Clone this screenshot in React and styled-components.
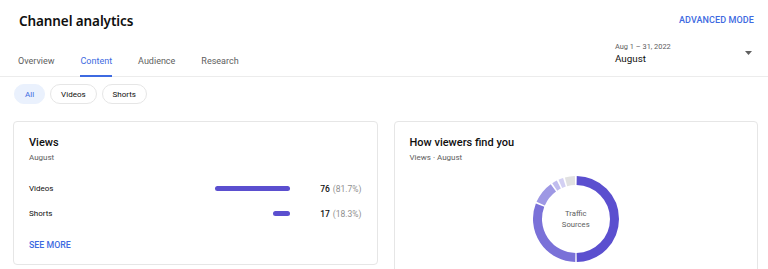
import React from "react";
import styled, { createGlobalStyle } from "styled-components";

const GlobalStyle = createGlobalStyle`
  body {
    margin: 0;
    background: #ffffff;
    font-family: Roboto, "Liberation Sans", sans-serif;
    color: #0f0f0f;
  }
`;

const tabs = ["Overview", "Content", "Audience", "Research"];
const chips = ["All", "Videos", "Shorts"];

const viewRows = [
  { label: "Videos", value: 76, pct: 81.7 },
  { label: "Shorts", value: 17, pct: 18.3 },
];

const segments = [
  { from: 1, to: 179, color: "#5b4fcf" },
  { from: 181, to: 291, color: "#7a71d8" },
  { from: 293.5, to: 324, color: "#9e98e4" },
  { from: 326.5, to: 333.5, color: "#c0bcee" },
  { from: 336, to: 342.5, color: "#d3d0f3" },
  { from: 345, to: 358.5, color: "#e1e1e1" },
];

const point = (deg, r) => {
  const a = ((deg - 90) * Math.PI) / 180;
  return [43 + r * Math.cos(a), 43 + r * Math.sin(a)];
};

const arc = (from, to, r) => {
  const [x1, y1] = point(from, r);
  const [x2, y2] = point(to, r);
  const large = to - from > 180 ? 1 : 0;
  return `M ${x1} ${y1} A ${r} ${r} 0 ${large} 1 ${x2} ${y2}`;
};

const App = () => {
  const maxPct = Math.max(...viewRows.map((r) => r.pct));
  return (
    <Page>
      <GlobalStyle />
      <TopBar>
        <Title>Channel analytics</Title>
        <TextLink>ADVANCED MODE</TextLink>
      </TopBar>
      <NavRow>
        <Tabs>
          {tabs.map((t) => (
            <Tab key={t} $active={t === "Content"}>
              {t}
            </Tab>
          ))}
        </Tabs>
        <DatePicker>
          <DateText>
            <DateRange>Aug 1 – 31, 2022</DateRange>
            <DateLabel>August</DateLabel>
          </DateText>
          <Caret>
            <svg width="7" height="4" viewBox="0 0 7 4">
              <path d="M0 0 L7 0 L3.5 4 Z" fill="#606060" />
            </svg>
          </Caret>
        </DatePicker>
      </NavRow>
      <ChipRow>
        {chips.map((c) => (
          <Chip key={c} $active={c === "All"}>
            {c}
          </Chip>
        ))}
      </ChipRow>
      <Cards>
        <Card>
          <CardTitle>Views</CardTitle>
          <CardSub>August</CardSub>
          <Rows>
            {viewRows.map((r) => (
              <Row key={r.label}>
                <RowLabel>{r.label}</RowLabel>
                <BarArea>
                  <Bar style={{ width: `${(r.pct / maxPct) * 75}px` }} />
                </BarArea>
                <Value>
                  <b>{r.value}</b>
                  <Pct>({r.pct}%)</Pct>
                </Value>
              </Row>
            ))}
          </Rows>
          <SeeMore>SEE MORE</SeeMore>
        </Card>
        <Card $tall>
          <CardTitle>How viewers find you</CardTitle>
          <CardSub>Views · August</CardSub>
          <DonutWrap>
            <svg width="86" height="86" viewBox="0 0 86 86">
              {segments.map((s) => (
                <path
                  key={s.from}
                  d={arc(s.from, s.to, 38.5)}
                  fill="none"
                  stroke={s.color}
                  strokeWidth="9"
                />
              ))}
            </svg>
            <DonutLabel>
              Traffic
              <br />
              Sources
            </DonutLabel>
          </DonutWrap>
        </Card>
      </Cards>
    </Page>
  );
};

const Page = styled.div`
  width: 768px;
  height: 269px;
  overflow: hidden;
`;

const TopBar = styled.div`
  height: 41px;
  display: flex;
  align-items: center;
  justify-content: space-between;
  padding: 0 14px 0 19px;
`;

const Title = styled.div`
  font-family: "Noto Sans", sans-serif;
  font-weight: 600;
  font-size: 13.5px;
  letter-spacing: -0.1px;
`;

const TextLink = styled.div`
  color: #3e6ae1;
  font-size: 9px;
  font-weight: 500;
  letter-spacing: 0.1px;
  margin-top: -1px;
`;

const NavRow = styled.div`
  height: 35px;
  display: flex;
  justify-content: space-between;
  border-bottom: 1px solid #ececec;
  padding: 0 15px 0 18px;
`;

const Tabs = styled.div`
  display: flex;
  gap: 26px;
`;

const Tab = styled.div`
  display: flex;
  align-items: center;
  padding-top: 6px;
  font-size: 9px;
  color: ${(p) => (p.$active ? "#3e6ae1" : "#606060")};
  border-bottom: 2px solid ${(p) => (p.$active ? "#3e6ae1" : "transparent")};
  margin-bottom: -1px;
`;

const DatePicker = styled.div`
  width: 138px;
  height: 24px;
  display: flex;
  align-items: center;
  justify-content: space-between;
`;

const DateText = styled.div`
  display: flex;
  flex-direction: column;
`;

const DateRange = styled.div`
  font-size: 7.4px;
  line-height: 10px;
  color: #606060;
`;

const DateLabel = styled.div`
  font-size: 9.8px;
  line-height: 13px;
`;

const Caret = styled.div`
  display: flex;
  margin-right: 1px;
`;

const ChipRow = styled.div`
  display: flex;
  gap: 5px;
  padding: 7px 0 0 14px;
`;

const Chip = styled.div`
  height: 20px;
  box-sizing: border-box;
  padding: 0 10px;
  display: flex;
  align-items: center;
  border-radius: 10px;
  border: 1px solid ${(p) => (p.$active ? "#eaf1fd" : "#e6e6e6")};
  background: ${(p) => (p.$active ? "#eaf1fd" : "#ffffff")};
  color: ${(p) => (p.$active ? "#3e6ae1" : "#0f0f0f")};
  font-size: 8px;
`;

const Cards = styled.div`
  display: grid;
  grid-template-columns: 1fr 1fr;
  gap: 16px;
  align-items: start;
  padding: 17px 10px 0 13px;
`;

const Card = styled.div`
  border: 1px solid #e6e6e6;
  border-radius: 4px;
  padding: 14px 15px ${(p) => (p.$tall ? "40px" : "13px")};
`;

const CardTitle = styled.div`
  font-size: 11px;
  font-weight: 500;
  line-height: 14px;
`;

const CardSub = styled.div`
  font-size: 8px;
  line-height: 12px;
  margin-top: 2px;
  color: #606060;
`;

const Rows = styled.div`
  margin-top: 12px;
`;

const Row = styled.div`
  height: 25px;
  display: grid;
  grid-template-columns: 1fr 100px 72px;
  align-items: center;
`;

const RowLabel = styled.div`
  font-size: 8px;
`;

const BarArea = styled.div`
  display: flex;
  justify-content: flex-end;
`;

const Bar = styled.div`
  height: 5px;
  border-radius: 3px;
  background: #5b4fcf;
`;

const Value = styled.div`
  display: flex;
  justify-content: flex-end;
  font-size: 8.5px;
  b {
    font-weight: 500;
  }
`;

const Pct = styled.span`
  color: #909090;
  margin-left: 3px;
`;

const SeeMore = styled.div`
  margin-top: 13px;
  line-height: 12px;
  color: #3e6ae1;
  font-size: 8.8px;
  font-weight: 500;
`;

const DonutWrap = styled.div`
  position: relative;
  width: 86px;
  height: 86px;
  margin: 12px auto 0;
  svg {
    display: block;
  }
`;

const DonutLabel = styled.div`
  position: absolute;
  inset: 0;
  display: flex;
  align-items: center;
  justify-content: center;
  text-align: center;
  font-size: 7.7px;
  line-height: 11px;
  color: #606060;
`;

export default App;
